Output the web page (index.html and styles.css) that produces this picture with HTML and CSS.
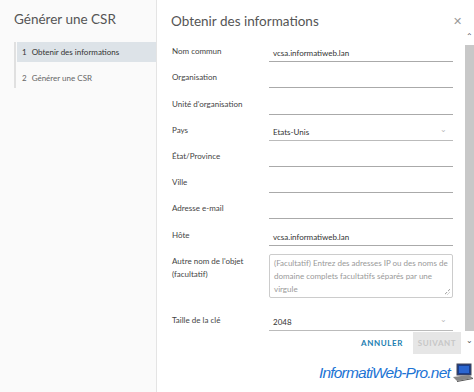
FILE: index.html
```html
<!DOCTYPE html>
<html lang="fr">
<head>
    <meta charset="UTF-8">
    <title>Générer une CSR</title>
    <link rel="stylesheet" href="styles.css">
</head>
<body>
<div class="wizard">
    <div class="steps">
        <h3 class="steps-title">Générer une CSR</h3>
        <ul class="step-list">
            <li class="step active"><span class="num">1</span>Obtenir des informations</li>
            <li class="step"><span class="num">2</span>Générer une CSR</li>
        </ul>
    </div>
    <div class="main">
        <div class="content">
            <div class="main-header">
                <h3 class="main-title">Obtenir des informations</h3>
                <span class="close">&#x2715;</span>
            </div>
            <form class="form">
                <div class="row"><label>Nom commun</label><div class="field">vcsa.informatiweb.lan</div></div>
                <div class="row"><label>Organisation</label><div class="field"></div></div>
                <div class="row"><label>Unité d'organisation</label><div class="field"></div></div>
                <div class="row"><label>Pays</label><div class="field select">Etats-Unis<span class="caret">&#x2304;</span></div></div>
                <div class="row"><label>État/Province</label><div class="field"></div></div>
                <div class="row"><label>Ville</label><div class="field"></div></div>
                <div class="row"><label>Adresse e-mail</label><div class="field"></div></div>
                <div class="row"><label>Hôte</label><div class="field">vcsa.informatiweb.lan</div></div>
                <div class="row row-area"><label>Autre nom de l'objet<br>(facultatif)</label>
                    <div class="area">(Facultatif) Entrez des adresses IP ou des noms de domaine complets facultatifs séparés par une virgule<span class="grip"></span></div>
                </div>
                <div class="row row-key"><label>Taille de la clé</label><div class="field select">2048<span class="caret">&#x2304;</span></div></div>
            </form>
            <div class="footer">
                <button class="btn-link">ANNULER</button>
                <button class="btn-disabled">SUIVANT</button>
            </div>
            <div class="watermark">InformatiWeb-Pro.net
                <svg width="22" height="20" viewBox="0 0 22 20">
                    <rect x="5" y="1" width="14" height="11" fill="#1a3e8c" stroke="#445" stroke-width="1"/>
                    <rect x="7" y="3" width="10" height="7" fill="#2b66d0"/>
                    <polygon points="1,14 17,12 21,15 5,18" fill="#888"/>
                    <polygon points="5,18 21,15 21,16 5,19" fill="#555"/>
                </svg>
            </div>
        </div>
        <div class="scrollbar">
            <span class="arrow">&#x2303;</span>
            <div class="thumb"></div>
            <span class="arrow">&#x2304;</span>
        </div>
    </div>
</div>
</body>
</html>
```

FILE: styles.css
```css
* {
    box-sizing: border-box;
}

body {
    margin: 0;
    font-family: Lato, "Open Sans", sans-serif;
    color: #333;
    background: #fff;
}

.wizard {
    display: flex;
    width: 474px;
    height: 392px;
}

.steps {
    width: 157px;
    background: #fafafa;
    border-right: 1px solid #e4e4e4;
    padding: 11px 0 0 14px;
}

.steps-title {
    margin: 0 0 15px;
    font-weight: normal;
    font-size: 13.5px;
    color: #555;
}

.step-list {
    list-style: none;
    margin: 0;
    padding: 0;
    border-left: 2px solid #e0e0e0;
}

.step {
    height: 20px;
    margin-bottom: 6px;
    padding-left: 5px;
    margin-left: 1px;
    font-size: 8px;
    line-height: 20px;
    color: #666;
}

.step.active {
    background: #dde3e8;
    color: #333;
}

.num {
    margin-right: 5px;
}

.main {
    flex: 1;
    display: flex;
}

.content {
    flex: 1;
    display: flex;
    flex-direction: column;
}

.main-header {
    display: flex;
    justify-content: space-between;
    align-items: center;
    padding: 11px 3px 0 14px;
    height: 30px;
}

.main-title {
    margin: 0;
    font-weight: normal;
    font-size: 13.5px;
    color: #555;
}

.close {
    font-size: 11px;
    color: #999;
}

.form {
    height: 302px;
    padding: 6px 12px 0 15px;
}

.row {
    display: flex;
    align-items: flex-end;
    height: 26.2px;
    font-size: 8px;
}

.row label {
    width: 97px;
    padding-bottom: 6px;
    color: #444;
}

.field {
    flex: 1;
    position: relative;
    height: 18px;
    border-bottom: 1px solid #aaa;
    padding: 4px 0 0 4px;
    color: #333;
}

.select {
    border-bottom-color: #bbb;
}

.caret {
    position: absolute;
    right: 6px;
    top: 1px;
    font-size: 8px;
    color: #bbb;
}

.row-area {
    height: 60px;
    align-items: flex-start;
    padding-top: 8px;
}

.row-area label {
    line-height: 13px;
    padding-top: 1px;
}

.area {
    flex: 1;
    position: relative;
    height: 44px;
    border: 1px solid #ccc;
    border-radius: 2px;
    padding: 2px 4px;
    line-height: 13px;
    color: #999;
    overflow: hidden;
}

.grip {
    position: absolute;
    right: 2px;
    bottom: 2px;
    width: 6px;
    height: 6px;
    background: linear-gradient(135deg, transparent 50%, #aaa 50%, transparent 60%, transparent 70%, #aaa 70%, transparent 80%);
}

.row-key {
    height: 25px;
}

.footer {
    display: flex;
    justify-content: flex-end;
    align-items: center;
    gap: 10px;
    padding: 0 4px 0 0;
    height: 22px;
}

.btn-link {
    border: 0;
    background: none;
    font-family: inherit;
    font-size: 8px;
    font-weight: bold;
    letter-spacing: 0.6px;
    color: #1c7eb0;
    padding: 0;
}

.btn-disabled {
    border: 0;
    background: #e6e6e6;
    font-family: inherit;
    font-size: 8px;
    font-weight: bold;
    letter-spacing: 0.6px;
    color: #c6c6c6;
    width: 48px;
    height: 22px;
    padding: 0;
}

.watermark {
    display: flex;
    justify-content: flex-end;
    align-items: center;
    gap: 2px;
    padding: 9px 0 0 0;
    margin-right: -9px;
    font-family: "Liberation Sans", Arial, sans-serif;
    font-style: italic;
    font-size: 15.5px;
    color: #1d74d4;
    letter-spacing: -0.8px;
}

.scrollbar {
    width: 9px;
    display: flex;
    flex-direction: column;
    align-items: center;
    padding-top: 31px;
}

.arrow {
    font-size: 8px;
    color: #555;
    height: 12px;
}

.thumb {
    width: 9px;
    height: 286px;
    margin: 2px 0 4px;
    background: #c8c8c8;
}
```
